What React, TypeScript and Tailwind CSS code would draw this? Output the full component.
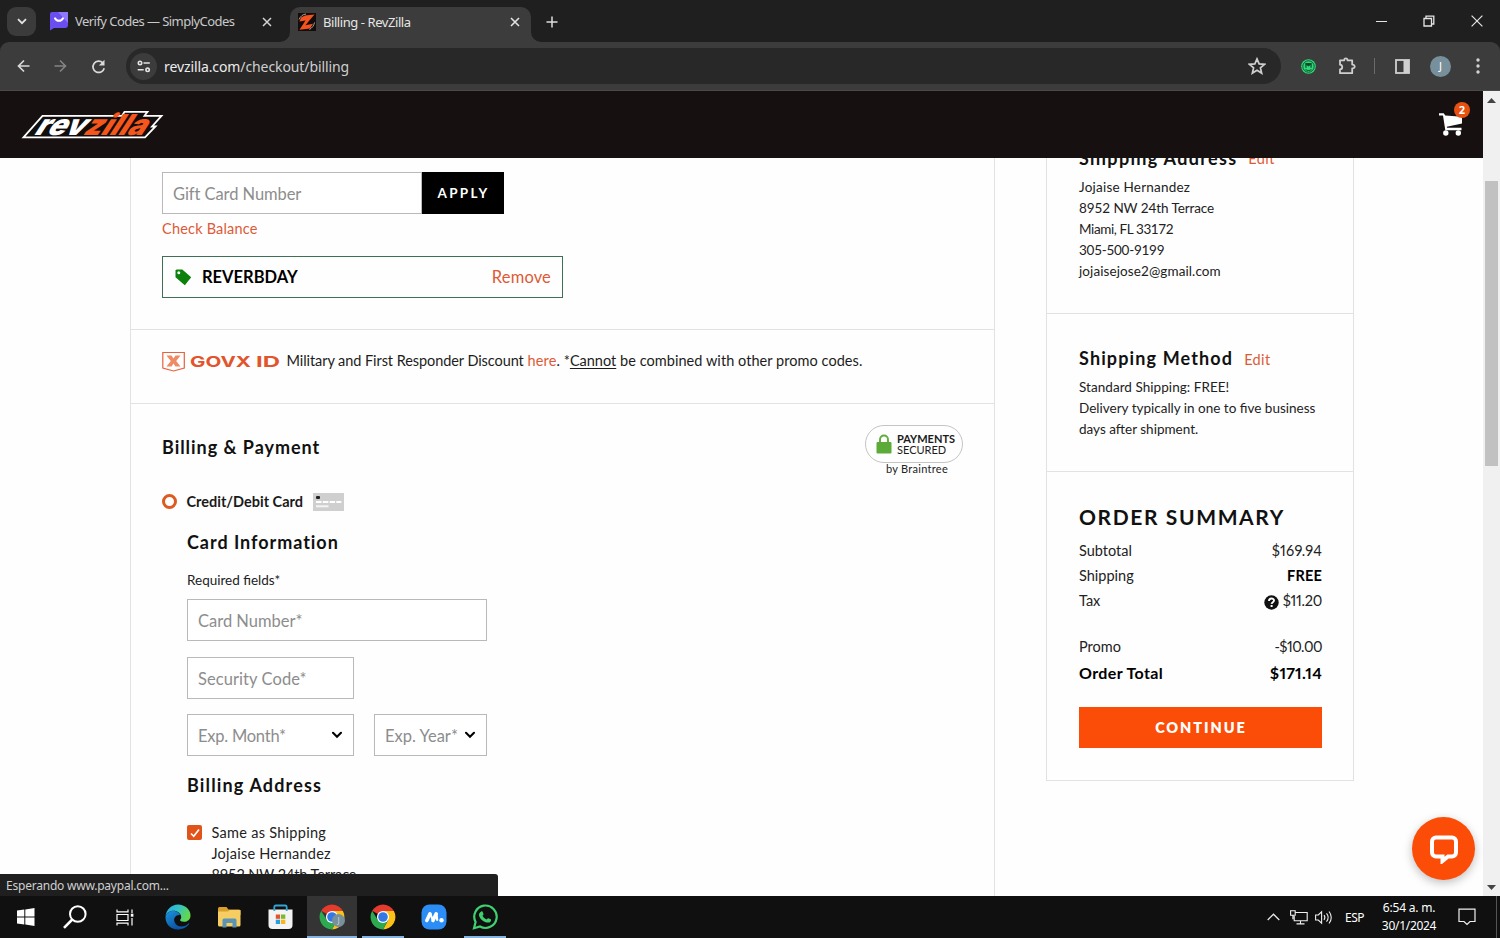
import type { ReactNode } from "react";

function Field({ label, className, select }: { label: string; className: string; select?: boolean }) {
  return (
    <div
      className={`flex h-[42px] items-center justify-between border border-[#b9b9b9] bg-white pr-[10px] pl-[10px] text-[16.5px] whitespace-nowrap text-[#8d8d8d] ${className}`}
    >
      <span className="pt-[2px]">{label}</span>
      {select && (
        <svg width="12" height="8" viewBox="0 0 12 8" fill="none" stroke="#000" strokeWidth="2.1" strokeLinecap="round">
          <path d="M2 1.8 6 5.7 10 1.8" />
        </svg>
      )}
    </div>
  );
}

function Row({ label, children }: { label: string; children: ReactNode }) {
  return (
    <div className="flex h-[25px] items-center justify-between text-[14.5px] text-[#222]">
      <span>{label}</span>
      <span className="flex items-center proportional-nums">{children}</span>
    </div>
  );
}

function TabStrip() {
  return (
    <div className="flex h-[42px] shrink-0 items-start bg-[#1f1f1f] font-['Noto_Sans',sans-serif] text-[13px] whitespace-nowrap">
      <div className="mt-[7px] ml-[7px] flex h-[29px] w-[29px] items-center justify-center rounded-[9px] bg-[#3b3b3b]">
        <svg width="10" height="7" viewBox="0 0 10 7" fill="none" stroke="#e3e3e3" strokeWidth="1.8">
          <path d="M1 1.2 5 5.2 9 1.2" />
        </svg>
      </div>
      <div className="ml-[14px] flex h-[43px] w-[225px] items-center">
        <svg width="18" height="19" viewBox="0 0 18 19">
          <path d="M2 0h16v13a3 3 0 0 1-3 3H4l-4 2.500V2a2 2 0 0 1 2-2z" fill="#6b4ef0" />
          <path d="M8 0h10v11z" fill="#8f78fa" />
          <path d="M5 6.300c1.600 3.400 6.400 3.400 8 0" fill="none" stroke="#fff" strokeWidth="2" strokeLinecap="round" />
        </svg>
        <span className="ml-[7px] w-[187px] pt-px tracking-[-0.55px] text-[#c9c9c9]">Verify Codes — SimplyCodes</span>
        <svg className="shrink-0" width="10" height="10" viewBox="0 0 10 10" stroke="#d5d5d5" strokeWidth="1.5">
          <path d="M1 1 9 9M9 1 1 9" />
        </svg>
      </div>
      <div className="ml-[5px] flex items-end self-end">
        <svg width="10" height="10" viewBox="0 0 10 10">
          <path d="M10 0v10H0A10 10 0 0 0 10 0z" fill="#3c3c3c" />
        </svg>
        <div className="flex h-[35px] w-[241px] items-center rounded-t-[10px] bg-[#3c3c3c] pb-[5px] pl-[8px]">
          <svg width="18" height="18" viewBox="0 0 18 18">
            <rect width="18" height="18" fill="#120d0b" />
            <path d="M3 4.500 7 2.500 16.500 1.500 10.500 8.500 7.500 12.300l7.500-1.500-3 4.700-10.500 1.300 6-9.300L1.500 8.500z" fill="#f4521e" />
            <path d="M1 6.500C2.500 3 5 1.300 8 1M16.500 9.500c-.5 3-2.500 5.500-5 7" fill="none" stroke="#a5a09d" strokeWidth="1" />
          </svg>
          <span className="ml-[7px] w-[187px] pt-px tracking-[-0.43px] text-[#e6e6e6]">Billing - RevZilla</span>
          <svg className="shrink-0" width="10" height="10" viewBox="0 0 10 10" stroke="#e3e3e3" strokeWidth="1.600">
            <path d="M1 1 9 9M9 1 1 9" />
          </svg>
        </div>
        <svg width="10" height="10" viewBox="0 0 10 10">
          <path d="M0 0v10h10A10 10 0 0 1 0 0z" fill="#3c3c3c" />
        </svg>
      </div>
      <svg className="mt-[16px] ml-[5px]" width="12" height="12" viewBox="0 0 12 12" stroke="#dedede" strokeWidth="1.500">
        <path d="M6 .5v11M.5 6h11" />
      </svg>
      <div className="mt-[15px] mr-[17px] ml-auto flex items-center gap-[36px]">
        <svg width="11" height="12" viewBox="0 0 11 12" stroke="#e5e5e5">
          <path d="M0 6.500h11" />
        </svg>
        <svg width="12" height="12" viewBox="0 0 12 12" fill="none" stroke="#e5e5e5" strokeWidth="1.300">
          <path d="M1 3.500h7.500V11H1z" />
          <path d="M3 3.500V1.200h7.800V9H8.500" />
        </svg>
        <svg width="12" height="12" viewBox="0 0 12 12" stroke="#e5e5e5" strokeWidth="1.200">
          <path d="M.6.6 11.400 11.400M11.400.6.6 11.400" />
        </svg>
      </div>
    </div>
  );
}

function Toolbar() {
  return (
    <div className="h-[49px] shrink-0 bg-[#1f1f1f]">
      <div className="flex h-full items-center rounded-t-[9px] border-b border-[#4a4a4a] bg-[#3c3c3c]">
        <svg className="ml-[17px]" width="13" height="14" viewBox="0 0 13 14" fill="none" stroke="#d8d8d8" strokeWidth="1.700">
          <path d="M12.500 7H1.500M7 1.500 1.500 7 7 12.500" />
        </svg>
        <svg className="ml-[24px]" width="13" height="14" viewBox="0 0 13 14" fill="none" stroke="#848484" strokeWidth="1.600">
          <path d="M.5 7h11M6 1.500 11.500 7 6 12.500" />
        </svg>
        <svg className="ml-[24px]" width="15" height="15" viewBox="0 0 15 15" fill="none" stroke="#dadada" strokeWidth="1.700">
          <path d="M13.200 9.200A5.700 5.700 0 1 1 11.800 3.800" />
          <path d="M13.500.8v5.700H7.800z" fill="#dadada" stroke="none" />
        </svg>
        <div className="ml-[20px] flex h-[36px] w-[1155px] items-center rounded-full bg-[#282828] pl-[4px]">
          <div className="flex h-[27px] w-[27px] items-center justify-center rounded-full bg-[#3c3c3c]">
            <svg width="14" height="13" viewBox="0 0 14 13" fill="none" stroke="#e3e3e3" strokeWidth="1.600">
              <circle cx="3" cy="3" r="1.700" />
              <path d="M6.500 3h6.300M.7 9.800h6" />
              <circle cx="10.600" cy="9.800" r="1.700" />
            </svg>
          </div>
          <span className="ml-[7px] font-['Noto_Sans',sans-serif] text-[14px] tracking-[-0.1px] whitespace-nowrap text-[#cfcfcf]">
            <span className="text-[#ececec]">revzilla.com</span>/checkout/billing
          </span>
          <svg className="mr-[15px] ml-auto" width="18" height="18" viewBox="0 0 17 17" fill="none" stroke="#cfcfcf" strokeWidth="1.600">
            <path d="m8.500 1.800 2 4.700 5.100.4-3.900 3.300 1.200 5-4.400-2.700-4.400 2.700 1.200-5L1.400 6.900l5.100-.4z" />
          </svg>
        </div>
        <svg className="ml-[20px]" width="15" height="15" viewBox="0 0 15 15">
          <circle cx="7.500" cy="7.500" r="7.300" fill="#2fd878" />
          <circle cx="7.500" cy="7.500" r="5.700" fill="none" stroke="#0c4a2a" strokeWidth=".9" />
          <path d="M4.300 4h6.400v4.500l-1.200.6V6L7.500 7.500 5.500 6v3.100l-1.200-.6zM4.500 10c2 1.500 4 1.500 6 0v1c-2 1.300-4 1.300-6 0z" fill="#0c4a2a" />
        </svg>
        <svg className="ml-[22px]" width="19" height="18" viewBox="0 0 19 18" fill="none" stroke="#cfcfcf" strokeWidth="1.800" strokeLinejoin="round">
          <path d="M2 3.300h4.200c-.3-2.600 3.600-2.600 3.300 0h4.700v4.300c3.300-.3 3.300 4 0 3.700v4.900H2v-3.700c3-.1 3-4.700 0-4.800z" />
        </svg>
        <div className="ml-[17px] h-[16px] w-px bg-[#6a6a6a]" />
        <svg className="ml-[20px]" width="15" height="15" viewBox="0 0 15 15">
          <rect x="1" y="1" width="13" height="13" fill="none" stroke="#d0d0d0" strokeWidth="1.800" />
          <path d="M8.500 1H14v13H8.500z" fill="#d0d0d0" />
        </svg>
        <div className="ml-[20px] flex h-[21px] w-[21px] items-center justify-center rounded-full bg-[#78909c] font-['Noto_Sans',sans-serif] text-[11px] text-white">J</div>
        <svg className="ml-[25px]" width="4" height="16" viewBox="0 0 4 16" fill="#d3d3d3">
          <circle cx="2" cy="2" r="1.700" />
          <circle cx="2" cy="8" r="1.700" />
          <circle cx="2" cy="14" r="1.700" />
        </svg>
      </div>
    </div>
  );
}

function RevzillaLogo() {
  return (
    <svg width="146" height="32" viewBox="20 109 146 32">
      <path
        d="M23.500 137.300 42.500 115.800H122l2.500-4h23l-3 4h17L152 126.500h3.500L145 137.300z"
        fill="#120e0d"
        stroke="#fff"
        strokeWidth="1.800"
      />
      <g transform="translate(33 135) skewX(-33)" fontFamily="Inter, sans-serif" fontWeight="900" fontSize="29">
        <text x="0" y="0" fill="#fff" textLength="49" lengthAdjust="spacingAndGlyphs">
          rev
        </text>
        <text x="49" y="0" fill="#f4561c" textLength="61" lengthAdjust="spacingAndGlyphs">
          zilla
        </text>
      </g>
    </svg>
  );
}

function SiteHeader() {
  return (
    <div className="flex h-[67px] shrink-0 items-start justify-between bg-[#161010] pt-[10px] pr-[12px] pl-[20px]">
      <div className="mt-[8px]">
        <RevzillaLogo />
      </div>
      <div className="relative h-[40px] w-[33px]">
        <svg className="mt-[11px] ml-px" width="26" height="25" viewBox="0 0 26 25">
          <path d="M0 1.300h4.700L6.300 3.500 23 4.800V11.500L7.800 14.800l.2 1H22.500v2.400H6.300L4 3.600H0z" fill="#fff" />
          <circle cx="6.800" cy="21" r="2.700" fill="#fff" />
          <circle cx="19.300" cy="21" r="2.700" fill="#fff" />
        </svg>
        <span className="absolute top-[1px] left-[16px] flex h-[16px] w-[16px] items-center justify-center rounded-full bg-[#e8500f] font-['Open_Sans',sans-serif] text-[11px] font-bold text-white">
          2
        </span>
      </div>
    </div>
  );
}

function MainColumn() {
  return (
    <div className="ml-[130px] h-[900px] w-[865px] shrink-0 border-x border-[#e2e2e2]">
      <div className="h-[172px] border-b border-[#e2e2e2] px-[31px] pt-[14px]">
        <div className="flex">
          <Field label="Gift Card Number" className="w-[260px] tracking-[-0.07px]" />
          <div className="flex h-[42px] w-[82px] items-center justify-center bg-black pl-px text-[13.5px] font-bold tracking-[2.3px] text-white">APPLY</div>
        </div>
        <div className="h-[30px] text-[14.5px] leading-[30px] tracking-[0.2px] text-[#dd5a36]">Check Balance</div>
        <div className="mt-[12px] flex h-[42px] w-[401px] items-center border border-[#3f6f55] pr-[11px] pl-[12px] text-[16.5px]">
          <svg width="17" height="17" viewBox="0 0 17 17">
            <path d="M1.500.5h5.800l8.900 7.800-6.400 8L.5 8.300V1.500z" fill="#0b800b" />
            <circle cx="3.800" cy="3.800" r="1.500" fill="#fff" />
          </svg>
          <span className="ml-[10px] pt-px font-bold">REVERBDAY</span>
          <span className="ml-auto pt-px tracking-[0.16px] text-[#dd5a36]">Remove</span>
        </div>
      </div>
      <div className="h-[74px] border-b border-[#e2e2e2] px-[31px]">
        <div className="flex h-[61px] items-center text-[14.5px] whitespace-pre text-[#1c1c1c]">
          <svg className="mt-[3px]" width="118" height="22" viewBox="0 0 118 22">
            <path d="M.8 1.500h21.500v15.500l-10.800 3L.8 17z" fill="none" stroke="#e6613c" strokeWidth="1.200" />
            <path d="M4.500 4.500h5l2 3 2-3h5l-4.300 5.500 4.300 5.500h-5l-2-3-2 3h-5l4.300-5.500z" fill="#ee8a66" />
            <text x="28" y="16.300" fontFamily="Inter, sans-serif" fontWeight="700" fontSize="15" fill="#e2552c" textLength="61" lengthAdjust="spacingAndGlyphs">
              GOVX
            </text>
            <text x="94" y="16.300" fontFamily="Inter, sans-serif" fontWeight="700" fontSize="15" fill="#e2552c" textLength="24" lengthAdjust="spacingAndGlyphs">
              ID
            </text>
          </svg>
          <span className="ml-[6.500px] tracking-[-0.07px]">Military and First Responder Discount </span>
          <span className="tracking-[0.2px] text-[#dd5a36]">here</span>
          <span>. *</span>
          <span className="underline underline-offset-2">Cannot</span>
          <span className="tracking-[0.05px]"> be combined with other promo codes.</span>
        </div>
      </div>
      <div className="px-[31px] pt-[21px]">
        <div className="flex h-[65px] items-start justify-between">
          <h2 className="mt-[10px] text-[18px] leading-[25px] font-bold tracking-[0.96px] text-[#111]">Billing &amp; Payment</h2>
          <div className="flex w-[98px] flex-col items-center">
            <div className="flex h-[38px] w-[98px] items-center rounded-full border border-[#c4c4c4] pl-[10px]">
              <svg width="16" height="20" viewBox="0 0 16 20">
                <path d="M4 9V5.500a4 4 0 0 1 8 0V9" fill="none" stroke="#62ad3e" strokeWidth="1.900" />
                <rect x=".5" y="8" width="15" height="11.500" rx="1" fill="#5cab38" />
              </svg>
              <div className="ml-[5px] text-[11px] leading-[11.500px] text-[#1c1c1c]">
                <div className="font-bold">PAYMENTS</div>
                <div>SECURED</div>
              </div>
            </div>
            <div className="ml-[6px] text-[11px] leading-[12px] tracking-[0.28px] whitespace-nowrap text-[#222]">by Braintree</div>
          </div>
        </div>
        <div className="flex h-[24px] items-center">
          <span className="-mt-px h-[15px] w-[15px] rounded-full border-[3.500px] border-[#dd5a21]" />
          <span className="ml-[9.500px] text-[14.5px] font-bold text-[#1a1a1a]">Credit/Debit Card</span>
          <svg className="ml-[10px]" width="31" height="18" viewBox="0 0 31 18">
            <rect width="31" height="18" fill="#cfcfcf" />
            <rect x="3" y="3" width="4" height="3" rx="1" fill="#222" />
            <path d="M3 9h5.500M9.800 9h5.500M16.600 9h5.400M23.300 9h5" stroke="#fff" strokeWidth="2" />
            <path d="M3 13.300h12.500" stroke="#f4f4f4" strokeWidth="2" />
          </svg>
        </div>
        <div className="flex flex-col pl-[25px]">
          <h3 className="mt-[16px] text-[18px] leading-[24px] font-bold tracking-[0.96px] text-[#111]">Card Information</h3>
          <p className="mt-[14px] text-[13.5px] leading-[24px] text-[#222]">Required fields*</p>
          <Field label="Card Number*" className="mt-[7px] w-[300px]" />
          <Field label="Security Code*" className="mt-[16px] w-[167px] tracking-[0.07px]" />
          <div className="mt-[15px] flex gap-[20px]">
            <Field label="Exp. Month*" className="w-[167px] tracking-[-0.24px]" select />
            <Field label="Exp. Year*" className="w-[113px]" select />
          </div>
          <h3 className="mt-[17px] text-[18px] leading-[24px] font-bold tracking-[1.15px] text-[#111]">Billing Address</h3>
          <div className="mt-[25px] flex text-[14.5px] leading-[21px] text-[#222]">
            <span className="mt-[3px] flex h-[15px] w-[15px] items-center justify-center rounded-[2px] bg-[#e2531a]">
              <svg width="10" height="10" viewBox="0 0 10 10" fill="none" stroke="#fff" strokeWidth="1.600">
                <path d="M1 5.500 3.700 8.200 9 1.500" />
              </svg>
            </span>
            <div className="ml-[9.500px]">
              <div className="tracking-[0.28px]">Same as Shipping</div>
              <div className="tracking-[0.23px]">Jojaise Hernandez</div>
              <div className="tracking-[-0.1px]">8952 NW 24th Terrace</div>
            </div>
          </div>
        </div>
      </div>
    </div>
  );
}

function Sidebar() {
  return (
    <div className="ml-[51px] h-[623px] w-[308px] shrink-0 border-x border-b border-[#e2e2e2] text-[13.5px] leading-[21px] whitespace-nowrap text-[#222]">
      <div className="flow-root h-[156px] border-b border-[#e2e2e2] pl-[32px]">
        <div className="-mt-[12px] flex h-[24px] items-center">
          <h3 className="text-[18px] font-bold tracking-[1.3px] text-[#111]">Shipping Address</h3>
          <span className="ml-[11px] pt-px text-[14.5px] tracking-[0.38px] text-[#dd5a36]">Edit</span>
        </div>
        <div className="mt-[7px] tracking-[0.22px]">Jojaise Hernandez</div>
        <div className="tracking-[-0.08px]">8952 NW 24th Terrace</div>
        <div className="tracking-[-0.39px]">Miami, FL 33172</div>
        <div className="tracking-[-0.26px]">305-500-9199</div>
        <div className="tracking-[0.1px]">jojaisejose2@gmail.com</div>
      </div>
      <div className="h-[158px] border-b border-[#e2e2e2] pt-[32px] pl-[32px]">
        <div className="flex h-[24px] items-center">
          <h3 className="text-[18px] font-bold tracking-[1.13px] text-[#111]">Shipping Method</h3>
          <span className="ml-[11px] pt-[2px] text-[14.5px] tracking-[0.38px] text-[#dd5a36]">Edit</span>
        </div>
        <div className="mt-[7px] tracking-[0.05px]">Standard Shipping: FREE!</div>
        <div>Delivery typically in one to five business</div>
        <div>days after shipment.</div>
      </div>
      <div className="pt-[30px] pr-[31px] pl-[32px]">
        <h2 className="h-[29px] text-[21px] leading-[29px] font-bold tracking-[1.62px] text-[#111]">ORDER SUMMARY</h2>
        <div className="mt-[7px]">
          <Row label="Subtotal">
            <span className="tracking-[0.2px]">$169.94</span>
          </Row>
          <Row label="Shipping">
            <b className="tracking-[0.2px] text-black">FREE</b>
          </Row>
          <Row label="Tax">
            <svg className="mt-[3px] mr-[4px]" width="15" height="15" viewBox="0 0 15 15">
              <circle cx="7.500" cy="7.500" r="7.200" fill="#111" />
              <path d="M5 6c0-3.400 5-3.200 5-.5 0 1.700-2.300 1.700-2.400 3.400" fill="none" stroke="#fff" strokeWidth="1.900" />
              <rect x="6.600" y="10" width="2" height="2" fill="#fff" />
            </svg>
            <span className="tracking-[-0.25px]">$11.20</span>
          </Row>
        </div>
        <div className="mt-[21px]">
          <Row label="Promo">
            <span className="tracking-[-0.5px]">-$10.00</span>
          </Row>
        </div>
        <div className="flex h-[26px] items-center justify-between text-[16px] font-bold text-black">
          <span className="tracking-[0.38px]">Order Total</span>
          <span className="tracking-[0.25px] proportional-nums">$171.14</span>
        </div>
        <div className="mt-[22px] flex h-[41px] w-[243px] items-center justify-center bg-[#fb4d07] pl-px text-[14.5px] font-extrabold tracking-[1.950px] text-white">
          CONTINUE
        </div>
      </div>
    </div>
  );
}

function ChromeIcon() {
  return (
    <svg width="26" height="26" viewBox="0 0 26 26">
      <path d="M13 13 2.200 6.750A12.500 12.500 0 0 1 23.800 6.750z" fill="#e33b2e" />
      <path d="M13 7h10.900A12.500 12.500 0 0 1 13 25.500L18.200 16z" fill="#fbc116" />
      <path d="M7.800 16 2.200 6.750A12.500 12.500 0 0 0 13 25.500l5.200-9.500z" fill="#2da94f" />
      <circle cx="13" cy="13" r="6.100" fill="#fff" />
      <circle cx="13" cy="13" r="4.800" fill="#3478e5" />
    </svg>
  );
}

function Taskbar() {
  return (
    <div className="flex h-[42px] shrink-0 bg-[#101010] font-['Noto_Sans',sans-serif] text-[12px] whitespace-nowrap text-white">
      <div className="flex w-[51px] items-center justify-center">
        <svg width="18" height="18" viewBox="0 0 18 18" fill="#fff">
          <path d="M0 2.600 7.300 1.600v6.900H0zM8.300 1.400 17.500 0v8.500H8.300zM0 9.500h7.300v6.900L0 15.400zM8.300 9.500h9.200V18l-9.200-1.400z" />
        </svg>
      </div>
      <div className="flex w-[48px] items-center justify-center">
        <svg width="24" height="24" viewBox="0 0 24 24" fill="none" stroke="#fff" strokeWidth="2">
          <circle cx="14.800" cy="9" r="7.800" />
          <path d="M9.300 14.500 1 22.800" strokeWidth="2.600" />
        </svg>
      </div>
      <div className="flex w-[52px] items-center justify-center">
        <svg width="18" height="17" viewBox="0 0 18 17" fill="none" stroke="#fff" strokeWidth="1.200">
          <path d="M1 .5v2.300h11V.5M1 5.500h11v6H1zM1 16.500v-2.300h11v2.300M16 .5v3.500M16 9v7.500" />
          <rect x="14.800" y="4.700" width="2.600" height="3" fill="#fff" stroke="none" />
        </svg>
      </div>
      <div className="flex w-[54px] items-center justify-center">
        <svg width="26" height="26" viewBox="0 0 26 26">
          <defs>
            <linearGradient id="edgeTop" x1="0" y1="0" x2="1" y2="0.4">
              <stop offset="0" stopColor="#2aa7e8" />
              <stop offset="0.5" stopColor="#33c2c9" />
              <stop offset="1" stopColor="#62d84e" />
            </linearGradient>
            <linearGradient id="edgeBody" x1="0" y1="0" x2="0.6" y2="1">
              <stop offset="0" stopColor="#1c93dc" />
              <stop offset="1" stopColor="#0c50a0" />
            </linearGradient>
          </defs>
          <path d="M.6 12.500C1 5.500 6.500.5 13 .5 20 .5 25.500 5.500 25.500 11.500c0 4-3 6.300-6.500 6.300-3.200 0-4.500-1.300-3.700-2.300.8-1 .9-1.700.9-2.500C16.200 9.500 12 6.800 8.500 6.800 4.500 6.800 1.500 9 .6 12.500z" fill="url(#edgeTop)" />
          <path d="M.5 13C1 9.500 4 7 8 7c4 0 6.500 2.200 7 4-4-.5-7 3-5.500 7.300 1.400 4 5.500 5.800 9.500 5.200-2 1.400-4 2-6.300 2C6 25.500.3 20.500.5 13z" fill="url(#edgeBody)" />
          <path d="M9.300 14c-1 4 1.700 8.500 7 8.500 3 0 5.500-1.300 7.200-3 .6-.6 1 0 .6.6-1.400 2.300-3.600 3.800-6 4.500C11.500 24.800 7.500 19 9.300 14z" fill="#0d5cae" />
        </svg>
      </div>
      <div className="flex w-[49px] items-center justify-center">
        <svg width="23" height="21" viewBox="0 0 23 21">
          <path d="M0 1.500A1.500 1.500 0 0 1 1.500 0h7l2 2.500H21a1.500 1.500 0 0 1 1.500 1.500v4H0z" fill="#d99f2b" />
          <path d="M0 4.500h10l1.500-1.500h11V18a1.500 1.500 0 0 1-1.500 1.500H1.500A1.500 1.500 0 0 1 0 18z" fill="#f5cd62" />
          <path d="M4.500 20.500V13a1.500 1.500 0 0 1 1.500-1.500h11a1.500 1.500 0 0 1 1.500 1.500v7.500h-4V16h-6v4.500z" fill="#5b93b5" />
        </svg>
      </div>
      <div className="flex w-[53px] items-center justify-center">
        <svg width="25" height="26" viewBox="0 0 25 26">
          <path d="M.5 5.500h24V21a4 4 0 0 1-4 4h-16a4 4 0 0 1-4-4z" fill="#f3f3f3" />
          <path d="M6.300 7V3a1.500 1.500 0 0 1 1.500-1.500h9.400A1.500 1.500 0 0 1 18.700 3v4" fill="none" stroke="#2fa5d8" strokeWidth="1.800" />
          <path d="M7.800 10.500h4.300v4.300H7.800z" fill="#e8502c" />
          <path d="M13 10.500h4.300v4.300H13z" fill="#7cb928" />
          <path d="M7.800 15.700h4.300V20H7.800z" fill="#2a9fdf" />
          <path d="M13 15.700h4.300V20H13z" fill="#f8b61c" />
        </svg>
      </div>
      <div className="relative flex w-[50px] items-center justify-center border-b-2 border-[#86b3e0] bg-[#343434] pt-[2px]">
        <ChromeIcon />
        <span className="absolute top-[18px] left-[25px] flex h-[13px] w-[13px] items-center justify-center rounded-full bg-[#78909c] text-[8px] text-[#c9d3d8]">J</span>
      </div>
      <div className="flex w-[51px] justify-center">
        <div className="flex w-[42px] items-center justify-center border-b-2 border-[#86b3e0] pt-[2px]">
          <ChromeIcon />
        </div>
      </div>
      <div className="flex w-[51px] items-center justify-center">
        <svg width="26" height="26" viewBox="0 0 26 26">
          <rect x=".5" y=".5" width="25" height="25" rx="8" fill="#2b8df5" />
          <path d="M5.800 16.500 9 9.800M12 16.500l3.200-6.700" stroke="#fff" strokeWidth="3.600" strokeLinecap="round" />
          <path d="m9.300 9.800 2.500 6M15.500 9.800l.7 6" stroke="#fff" strokeWidth="2.200" strokeLinecap="round" />
          <circle cx="20.500" cy="16.300" r="2.200" fill="#fff" />
        </svg>
      </div>
      <div className="flex w-[51px] justify-center">
        <div className="flex w-[42px] items-center justify-center border-b-2 border-[#86b3e0] pt-[2px]">
          <svg width="26" height="26" viewBox="0 0 26 26">
            <path d="M2 24.200 3.600 18A11.200 11.200 0 1 1 8 22.500z" fill="none" stroke="#3fd06f" strokeWidth="2.200" />
            <path d="M9.200 7.500c.9-.5 1.400 0 1.700 1l.6 1.500c.2.600-.6 1.200-1 1.700 1 1.800 2.200 2.900 4.200 3.700.5-.5 1-1.500 1.700-1.200l2.300 1.100c.6.3.3 1.500-.1 2.100-1 1.400-3 1.500-5 .8-3-1-5-3-6.300-5.800-.8-1.800 0-4 1.900-4.900z" fill="#3fd06f" />
          </svg>
        </div>
      </div>
      <div className="ml-auto flex items-center">
        <svg width="13" height="8" viewBox="0 0 13 8" fill="none" stroke="#e8e8e8" strokeWidth="1.300">
          <path d="M.7 7 6.500 1.200 12.300 7" />
        </svg>
        <svg className="ml-[10px]" width="18" height="15" viewBox="0 0 18 15" fill="none" stroke="#f0f0f0" strokeWidth="1.100">
          <path d="M5.500 2.500h11.700v8.200H4.200V6M10.500 10.700v3M6.500 13.900h8M.6.8h4.600v4.400H.6zM2.900 5.200v4" />
        </svg>
        <svg className="ml-[7px]" width="18" height="15" viewBox="0 0 18 15" fill="none" stroke="#f0f0f0" strokeWidth="1.100">
          <path d="M.6 5h2.700L6.600 1.800v11.400L3.300 10H.6zM9 5.200c1 1.300 1 3.300 0 4.600M11.500 3.400c2 2.400 2 5.800 0 8.200M14 1.500c3 3.500 3 8.500 0 12" />
        </svg>
        <span className="ml-[12px] w-[19px] pt-px tracking-[-0.5px]">ESP</span>
        <div className="ml-[15px] flex w-[60px] flex-col items-center leading-[18.500px]">
          <span className="tracking-[-0.2px]">6:54 a. m.</span>
          <span className="tracking-[-0.3px]">30/1/2024</span>
        </div>
        <svg className="ml-[19px]" width="18" height="18" viewBox="0 0 18 18" fill="none" stroke="#f0f0f0" strokeWidth="1.200">
          <path d="M1 1.200h16v12.300h-5L9 16.500l-3-3H1z" />
        </svg>
        <div className="ml-[20px] h-[42px] w-px bg-[#555]" />
        <div className="w-[3px]" />
      </div>
    </div>
  );
}

export default function App() {
  return (
    <div className="flex h-[938px] w-[1500px] flex-col overflow-hidden bg-white font-['Lato',sans-serif]">
      <TabStrip />
      <Toolbar />
      <div className="relative flex h-[805px] shrink-0">
        <div className="flex w-[1483px] flex-col bg-[#fefefe]">
          <SiteHeader />
          <div className="flex h-[738px] items-start overflow-hidden">
            <MainColumn />
            <Sidebar />
          </div>
        </div>
        <div className="flex w-[17px] flex-col items-center bg-[#f0f0f0]">
          <svg className="mt-[7px]" width="9" height="5" viewBox="0 0 9 5">
            <path d="M4.500 0 9 5H0z" fill="#444" />
          </svg>
          <div className="mt-[78px] h-[285px] w-[13px] bg-[#c1c1c1]" />
          <svg className="mt-auto mb-[6px]" width="9" height="5" viewBox="0 0 9 5">
            <path d="M4.500 5 0 0h9z" fill="#444" />
          </svg>
        </div>
        <div className="absolute bottom-0 left-0 flex h-[22px] w-[498px] items-center rounded-tr-[3px] bg-[#1f1f1f] pt-px pl-[6px] font-['Noto_Sans',sans-serif] text-[12px] tracking-[-0.22px] text-[#cfcfcf]">
          Esperando www.paypal.com...
        </div>
        <div className="absolute right-[25px] bottom-[16px] flex h-[63px] w-[63px] items-center justify-center rounded-full bg-[#fb4d07] shadow-[0_3px_10px_rgba(0,0,0,0.25)]">
          <svg width="30" height="30" viewBox="0 0 30 30" fill="none" stroke="#fff" strokeWidth="4" strokeLinejoin="miter">
            <path d="M7 3.500h16a4 4 0 0 1 4 4v11a4 4 0 0 1-4 4h-4L13.500 27v-4.500H7a4 4 0 0 1-4-4v-11a4 4 0 0 1 4-4z" />
          </svg>
        </div>
      </div>
      <Taskbar />
    </div>
  );
}
